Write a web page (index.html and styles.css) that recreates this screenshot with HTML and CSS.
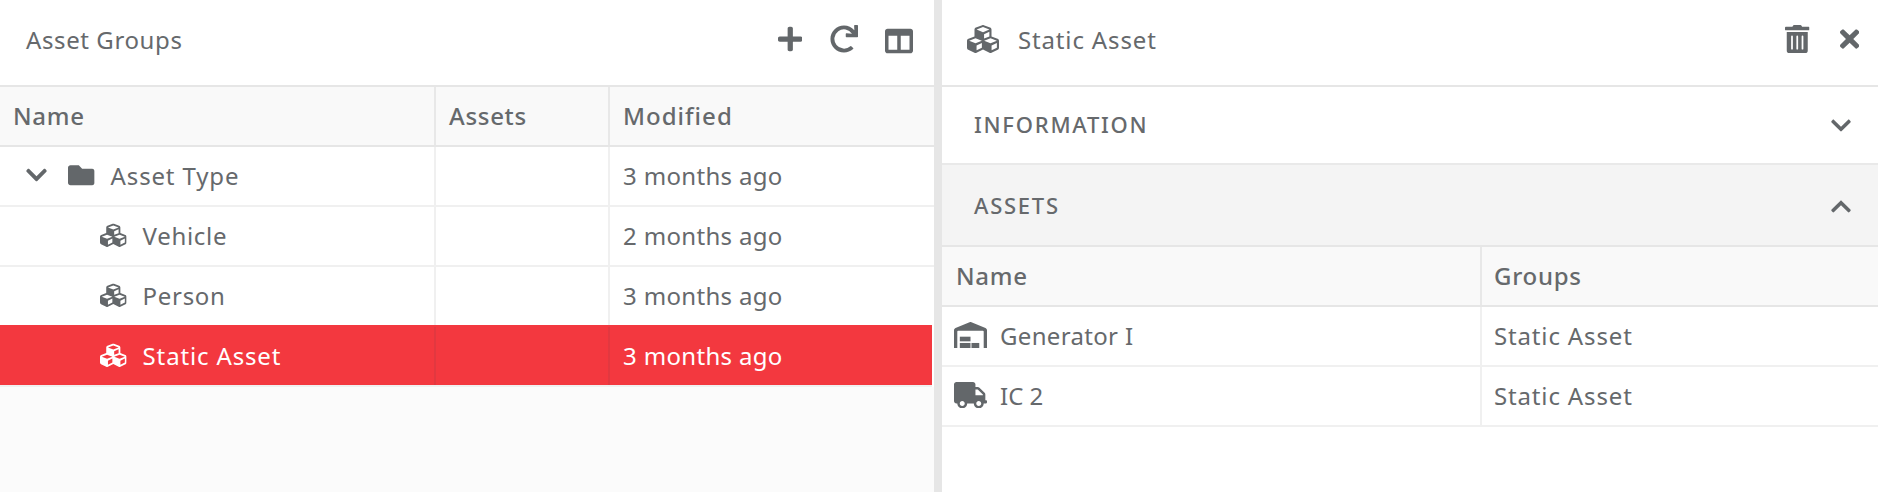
FILE: index.html
```html
<!DOCTYPE html>
<html lang="en">
<head>
<meta charset="utf-8">
<title>Asset Groups</title>
<link rel="stylesheet" href="styles.css">
</head>
<body>
<svg class="defs" aria-hidden="true">
  <symbol id="i-cubes" viewBox="0 0 512 512"><path d="M488.6 250.2L392 214V105.5c0-15-9.3-28.4-23.4-33.7l-100-37.5c-8.1-3.1-17.1-3.1-25.3 0l-100 37.5c-14.1 5.3-23.4 18.7-23.4 33.7V214l-96.6 36.2C9.3 255.5 0 268.9 0 283.9V394c0 13.6 7.7 26.1 19.9 32.2l100 50c10.1 5.1 22.1 5.1 32.2 0l103.9-52 103.9 52c10.1 5.1 22.1 5.1 32.2 0l100-50c12.2-6.1 19.9-18.6 19.9-32.2V283.9c0-15-9.3-28.4-23.4-33.7zM358 214.8l-85 31.9v-68.2l85-37v73.3zM154 104.1l102-38.2 102 38.2v.6l-102 41.4-102-41.4v-.6zm84 291.1l-85 42.5v-79.1l85-38.8v75.4zm0-112l-102 41.4-102-41.4v-.6l102-38.2 102 38.2v.6zm240 112l-85 42.5v-79.1l85-38.8v75.4zm0-112l-102 41.4-102-41.4v-.6l102-38.2 102 38.2v.6z"/></symbol>
  <symbol id="i-folder" viewBox="0 0 512 512"><path d="M464 128H272l-64-64H48C21.49 64 0 85.49 0 112v288c0 26.51 21.49 48 48 48h416c26.51 0 48-21.49 48-48V176c0-26.51-21.49-48-48-48z"/></symbol>
  <symbol id="i-plus" viewBox="0 0 448 512"><path d="M416 208H272V64c0-17.67-14.33-32-32-32h-32c-17.67 0-32 14.33-32 32v144H32c-17.67 0-32 14.33-32 32v32c0 17.67 14.33 32 32 32h144v144c0 17.67 14.33 32 32 32h32c17.67 0 32-14.33 32-32V304h144c17.67 0 32-14.33 32-32v-32c0-17.67-14.33-32-32-32z"/></symbol>
  <symbol id="i-redo" viewBox="0 0 512 512"><path d="M500.33 0h-47.41a12 12 0 0 0-12 12.57l4 82.76A247.42 247.42 0 0 0 256 8C119.34 8 7.9 119.53 8 256.19 8.1 393.07 119.1 504 256 504a247.1 247.1 0 0 0 166.18-63.91 12 12 0 0 0 .48-17.43l-34-34a12 12 0 0 0-16.38-.55A176 176 0 1 1 402.1 157.8l-101.53-4.87a12 12 0 0 0-12.57 12v47.41a12 12 0 0 0 12 12h200.33a12 12 0 0 0 12-12V12a12 12 0 0 0-12-12z"/></symbol>
  <symbol id="i-columns" viewBox="0 0 512 512"><path d="M464 32H48C21.49 32 0 53.49 0 80v352c0 26.51 21.49 48 48 48h416c26.51 0 48-21.49 48-48V80c0-26.51-21.49-48-48-48zM224 416H64V160h160v256zm224 0H288V160h160v256z"/></symbol>
  <symbol id="i-trash" viewBox="0 0 448 512"><path d="M32 464a48 48 0 0 0 48 48h288a48 48 0 0 0 48-48V128H32zm272-256a16 16 0 0 1 32 0v224a16 16 0 0 1-32 0zm-96 0a16 16 0 0 1 32 0v224a16 16 0 0 1-32 0zm-96 0a16 16 0 0 1 32 0v224a16 16 0 0 1-32 0zM432 32H312l-9.4-18.7A24 24 0 0 0 281.1 0H166.8a23.72 23.72 0 0 0-21.4 13.3L136 32H16A16 16 0 0 0 0 48v32a16 16 0 0 0 16 16h416a16 16 0 0 0 16-16V48a16 16 0 0 0-16-16z"/></symbol>
  <symbol id="i-times" viewBox="0 0 352 512"><path d="M242.72 256l100.07-100.07c12.28-12.28 12.28-32.19 0-44.48l-22.24-22.24c-12.28-12.28-32.19-12.28-44.48 0L176 189.28 75.93 89.21c-12.28-12.28-32.19-12.28-44.48 0L9.21 111.45c-12.28 12.28-12.28 32.19 0 44.48L109.28 256 9.21 356.07c-12.28 12.28-12.28 32.19 0 44.48l22.24 22.24c12.28 12.28 32.2 12.28 44.48 0L176 322.72l100.07 100.07c12.28 12.28 32.2 12.28 44.48 0l22.24-22.24c12.28-12.28 12.28-32.19 0-44.48L242.72 256z"/></symbol>
  <symbol id="i-down" viewBox="0 0 448 512"><path d="M207.029 381.476L12.686 187.132c-9.373-9.373-9.373-24.569 0-33.941l22.667-22.667c9.357-9.357 24.522-9.375 33.901-.04L224 284.505l154.745-154.021c9.379-9.335 24.544-9.317 33.901.04l22.667 22.667c9.373 9.373 9.373 24.569 0 33.941L240.971 381.476c-9.373 9.372-24.569 9.372-33.942 0z"/></symbol>
  <symbol id="i-up" viewBox="0 0 448 512"><path d="M240.971 130.524l194.343 194.343c9.373 9.373 9.373 24.569 0 33.941l-22.667 22.667c-9.357 9.357-24.522 9.375-33.901.04L224 227.495 69.255 381.516c-9.379 9.335-24.544 9.317-33.901-.04l-22.667-22.667c-9.373-9.373-9.373-24.569 0-33.941L207.03 130.525c9.372-9.373 24.568-9.373 33.941-.001z"/></symbol>
  <symbol id="i-warehouse" viewBox="0 0 640 512"><path d="M610.5 117L338.4 3.7a48.15 48.15 0 0 0-36.9 0L29.5 117C11.700 124.500 0 141.900 0 161.300V512h64V186a16 16 0 0 1 16-16h480a16 16 0 0 1 16 16v326h64V161.300c0-19.400-11.700-36.800-29.500-44.300z"/><rect x="113" y="285" width="207" height="90"/><rect x="113" y="407" width="207" height="105"/><rect x="339" y="407" width="151" height="105"/></symbol>
  <symbol id="i-truck" viewBox="0 0 640 512"><path d="M624 352h-16V243.900c0-12.700-5.100-24.900-14.100-33.900L494 110.100c-9-9-21.200-14.100-33.900-14.100H416V48c0-26.500-21.500-48-48-48H48C21.500 0 0 21.500 0 48v320c0 26.500 21.500 48 48 48h16c0 53 43 96 96 96s96-43 96-96h128c0 53 43 96 96 96s96-43 96-96h48c8.800 0 16-7.200 16-16v-32c0-8.800-7.200-16-16-16zM160 464c-26.500 0-48-21.500-48-48s21.500-48 48-48 48 21.500 48 48-21.500 48-48 48zm320 0c-26.500 0-48-21.500-48-48s21.500-48 48-48 48 21.500 48 48-21.500 48-48 48zm80-208H416V144h44.100l99.900 99.900V256z"/></symbol>
</svg>

<main class="app">
  <section class="panel panel-left">
    <header class="toolbar">
      <h1 class="title title-left">Asset Groups</h1>
      <div class="actions actions-left">
        <svg class="icon ic-plus"><use href="#i-plus"/></svg>
        <svg class="icon ic-redo"><use href="#i-redo"/></svg>
        <svg class="icon ic-columns"><use href="#i-columns"/></svg>
      </div>
    </header>
    <div class="table table-groups">
      <div class="row head">
        <div class="cell">Name</div>
        <div class="cell">Assets</div>
        <div class="cell tx-head-wide">Modified</div>
      </div>
      <div class="row">
        <div class="cell cell-folder">
          <svg class="icon ic-caret"><use href="#i-down"/></svg>
          <svg class="icon ic-folder"><use href="#i-folder"/></svg>
          <span class="tx-wide">Asset Type</span>
        </div>
        <div class="cell"></div>
        <div class="cell tx-tight">3 months ago</div>
      </div>
      <div class="row">
        <div class="cell cell-child"><svg class="icon ic-cubes"><use href="#i-cubes"/></svg><span class="tx-mid">Vehicle</span></div>
        <div class="cell"></div>
        <div class="cell tx-tight">2 months ago</div>
      </div>
      <div class="row">
        <div class="cell cell-child"><svg class="icon ic-cubes"><use href="#i-cubes"/></svg><span class="tx-mid">Person</span></div>
        <div class="cell"></div>
        <div class="cell tx-tight">3 months ago</div>
      </div>
      <div class="row selected">
        <div class="cell cell-child"><svg class="icon ic-cubes"><use href="#i-cubes"/></svg><span class="tx-wide">Static Asset</span></div>
        <div class="cell"></div>
        <div class="cell tx-tight">3 months ago</div>
      </div>
    </div>
  </section>

  <section class="panel panel-right">
    <header class="toolbar">
      <div class="title-group">
        <svg class="icon ic-title"><use href="#i-cubes"/></svg>
        <h2 class="title tx-wide">Static Asset</h2>
      </div>
      <div class="actions actions-right">
        <svg class="icon ic-trash"><use href="#i-trash"/></svg>
        <svg class="icon ic-times"><use href="#i-times"/></svg>
      </div>
    </header>
    <div class="accordion">
      <span class="accordion-label">INFORMATION</span>
      <svg class="icon ic-chev"><use href="#i-down"/></svg>
    </div>
    <div class="accordion open">
      <span>ASSETS</span>
      <svg class="icon ic-chev"><use href="#i-up"/></svg>
    </div>
    <div class="table table-assets">
      <div class="row head">
        <div class="cell">Name</div>
        <div class="cell">Groups</div>
      </div>
      <div class="row">
        <div class="cell cell-asset"><svg class="icon ic-asset"><use href="#i-warehouse"/></svg><span class="tx-tight">Generator I</span></div>
        <div class="cell tx-wide">Static Asset</div>
      </div>
      <div class="row">
        <div class="cell cell-asset"><svg class="icon ic-asset"><use href="#i-truck"/></svg><span>IC 2</span></div>
        <div class="cell tx-wide">Static Asset</div>
      </div>
    </div>
  </section>
</main>
</body>
</html>
```

FILE: styles.css
```css
* { box-sizing: border-box; }
html, body { margin: 0; height: 100%; }
body {
  font-family: "Noto Sans", "Open Sans", sans-serif;
  font-size: 24px;
  color: #66696c;
  background: #e6e6e6;
  overflow: hidden;
}
.defs { width: 0; height: 0; display: block; }
.icon { display: block; fill: #63676a; flex: none; }

.tx-tight { letter-spacing: 0.33px; }
.tx-mid { letter-spacing: 0.7px; }
.tx-wide { letter-spacing: 0.85px; }

.app { display: grid; grid-template-columns: 934px 936px; column-gap: 8px; height: 492px; }
.panel { display: flex; flex-direction: column; height: 492px; }
.panel-left { background: #fbfbfb; }
.panel-right { background: #fff; }

.toolbar {
  flex: none;
  height: 87px;
  padding-bottom: 7px;
  display: flex;
  align-items: center;
  justify-content: space-between;
  background: #fff;
  border-bottom: 2px solid #e6e6e6;
}
.title { margin: 0; font-size: 24px; font-weight: 400; }
.title-left { padding-left: 26px; letter-spacing: 0.6px; }
.title-group { display: flex; align-items: center; padding-left: 25px; }
.ic-title { width: 32px; height: 32px; margin-right: 19px; }

.actions { display: flex; align-items: center; }
.actions-left { padding-right: 21px; }
.actions-right { padding-right: 19px; }
.ic-plus { width: 24.5px; height: 28px; margin-right: 28px; }
.ic-redo { width: 28px; height: 28px; margin-right: 27px; }
.ic-columns { width: 28px; height: 28px; margin-top: 3px; }
.ic-trash { width: 24.5px; height: 28px; margin-right: 30px; }
.ic-times { width: 19.25px; height: 28px; }

.row { display: grid; height: 60px; background: #fff; border-bottom: 2px solid #f0f0f0; }
.table-groups .row { grid-template-columns: 436px 174px 1fr; }
.table-assets .row { grid-template-columns: 540px 1fr; }
.cell {
  display: flex;
  align-items: center;
  padding-left: 13px;
  padding-bottom: 2px;
  border-right: 2px solid #f0f0f0;
  min-width: 0;
  white-space: nowrap;
}
.cell:last-child { border-right: 0; }
.table-assets .cell:first-child { padding-left: 14px; }
.table-assets .cell:last-child { padding-left: 12px; }
.table-assets .cell-asset:first-child { padding-left: 12px; }
.head { background: #f9f9f9; border-bottom-color: #e6e6e6; font-weight: 500; letter-spacing: 0.7px; }
.head .cell { border-right-color: #e8e8e8; }
.head .tx-head-wide { letter-spacing: 1px; }

.table-groups .selected {
  margin-right: 2px;
  background: #f3383f;
  color: #fff;
  box-shadow: 0 -2px 0 #f3383f, 2px -2px 0 #fff, 2px 0 0 #fff;
}
.selected .cell { border-right-color: #e23840; }
.selected .icon { fill: #fff; }

.ic-caret { width: 21px; height: 24px; margin-left: 13px; margin-right: 21px; }
.ic-folder { width: 26.600px; height: 26.600px; margin-right: 16px; }
.ic-cubes { width: 26.600px; height: 26.600px; margin-right: 16px; }
.table-groups .cell-child { padding-left: 100px; }
.ic-asset { width: 33px; height: 26.400px; margin-right: 13px; }

.accordion {
  flex: none;
  display: flex;
  align-items: center;
  justify-content: space-between;
  padding: 0 27px 0 32px;
  height: 78px;
  border-bottom: 2px solid #e9e9e9;
  font-size: 22px;
  font-weight: 500;
  letter-spacing: 1.75px;
}
.accordion-label { margin-bottom: 2px; }
.accordion.open { height: 82px; background: #f4f4f4; border-bottom-color: #e6e6e6; }
.accordion.open .ic-chev { margin-top: 2px; }
.ic-chev { width: 20px; height: 23px; }
```
